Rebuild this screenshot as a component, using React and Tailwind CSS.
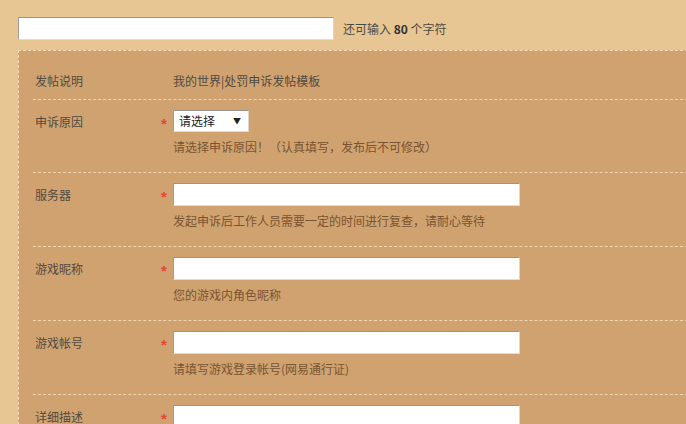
import React from 'react';

const font = { fontFamily: '"Noto Sans CJK SC", "Liberation Sans", sans-serif' };

const rows = [
  { label: '申诉原因', type: 'select', help: '请选择申诉原因！（认真填写，发布后不可修改）' },
  { label: '服务器', type: 'input', help: '发起申诉后工作人员需要一定的时间进行复查，请耐心等待' },
  { label: '游戏昵称', type: 'input', help: '您的游戏内角色昵称' },
  { label: '游戏帐号', type: 'input', help: '请填写游戏登录帐号(网易通行证)' },
  { label: '详细描述', type: 'input', help: '' },
];

const inset = 'bg-white border border-t-[#9c958d] border-l-[#a39c94] border-r-[#ddd5cc] border-b-[#e4dcd2]';

const FormRow = ({ row, last }) => (
  <div className={`flex pt-[10px] pb-[17px] ${last ? '' : 'border-b border-dashed border-[#efd6b0]'}`}>
    <div className="w-[122px] pl-[2px] h-[23px] flex items-center text-[#514a41]">{row.label}</div>
    <div className="w-[18px] h-[23px] flex justify-center pt-[6px] text-[#e5463a] text-[15px] leading-[15px] font-bold" style={{ fontFamily: '"Liberation Sans", sans-serif' }}>*</div>
    <div className="flex flex-col">
      {row.type === 'select' ? (
        <div className={`w-[76px] h-[22px] ${inset} flex items-center justify-between pl-[5px] pr-[7px] text-[12px] text-[#222]`}>
          <span>请选择</span>
          <span className="text-[8px] text-[#222]">▼</span>
        </div>
      ) : (
        <input className={`w-[347px] h-[23px] ${inset} outline-none`} />
      )}
      {row.help && <div className="mt-[7px] leading-[16px] text-[#7a5431]">{row.help}</div>}
    </div>
  </div>
);

export default function App() {
  return (
    <div className="w-[686px] h-[424px] overflow-hidden bg-[#e8c693] pl-[18px] pt-[17px] text-[12px]" style={font}>
      <div className="flex items-center h-[23px]">
        <input className={`w-[316px] h-[23px] ${inset} outline-none`} />
        <span className="ml-[9px] text-[#4f4a44]">
          还可输入 <b className="text-[#333] font-bold">80</b> 个字符
        </span>
      </div>

      <div className="mt-[10px] w-[700px] border-t border-l border-dashed border-[#f2ddbb] bg-[#cfa270] pl-[14px] h-[400px]">
        <div className="flex pt-[22px] pb-[10px] border-b border-dashed border-[#efd6b0]">
          <div className="w-[140px] pl-[2px] leading-[16px] text-[#514a41]">发帖说明</div>
          <div className="leading-[16px] text-[#4f4a44]">我的世界|处罚申诉发帖模板</div>
        </div>
        {rows.map((row, i) => (
          <FormRow key={row.label} row={row} last={i === rows.length - 1} />
        ))}
      </div>
    </div>
  );
}
